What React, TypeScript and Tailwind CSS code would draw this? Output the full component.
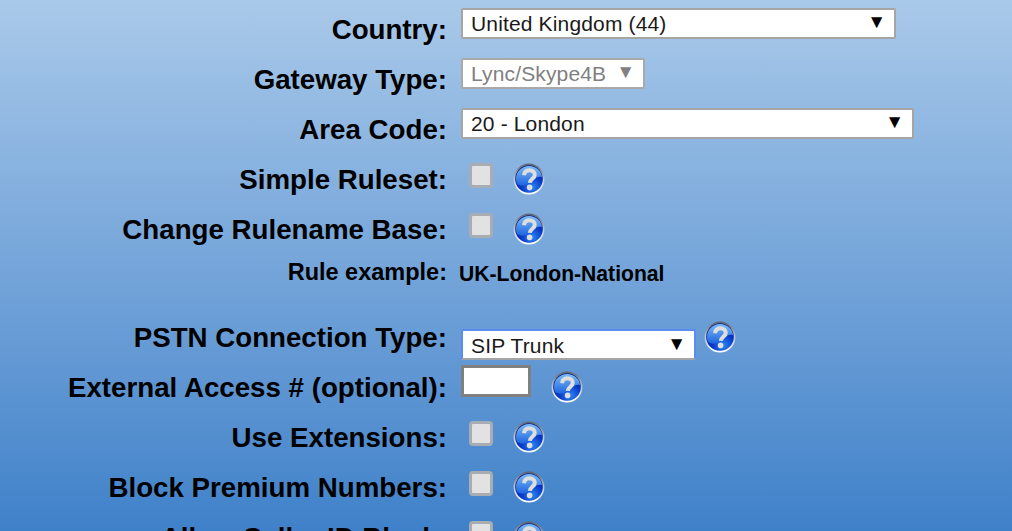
import { useId } from "react";

function HelpIcon({ className = "" }: { className?: string }) {
  const id = useId();
  return (
    <svg width="32" height="32" viewBox="0 0 32 32" className={`shrink-0 ${className}`}>
      <defs>
        <linearGradient id={`${id}ring`} x1="0" y1="0" x2="0" y2="1">
          <stop offset="0" stopColor="#5f646a" />
          <stop offset="0.45" stopColor="#b9bec4" />
          <stop offset="1" stopColor="#ffffff" />
        </linearGradient>
        <radialGradient id={`${id}ball`} cx="0.62" cy="0.8" r="0.8">
          <stop offset="0" stopColor="#2a86f2" />
          <stop offset="0.5" stopColor="#0636c8" />
          <stop offset="1" stopColor="#031f96" />
        </radialGradient>
        <linearGradient id={`${id}shine`} x1="0" y1="0" x2="0" y2="1">
          <stop offset="0" stopColor="#7dbcf5" />
          <stop offset="1" stopColor="#1c63e0" />
        </linearGradient>
      </defs>
      <circle cx="16" cy="16" r="15.400" fill={`url(#${id}ring)`} />
      <circle cx="16" cy="16" r="13.800" fill={`url(#${id}ball)`} />
      <path d="M3 16C3 8.500 9 3 16 3S29 8.500 29 14C22 12.500 19 19 13 22 9 23.500 5.500 22.500 3.800 20.500 3.300 19 3 17.500 3 16Z" fill={`url(#${id}shine)`} />
      <path d="M11 12.200C11.400 8.800 13.600 7.200 16.400 7.200 19.600 7.200 21.800 9 21.800 11.800 21.800 15.600 17 15.800 16.800 19.800" fill="none" stroke="#dedede" strokeWidth="4" />
      <circle cx="16.600" cy="24.400" r="2.800" fill="#dedede" />
    </svg>
  );
}

function Select({ value, width, disabled = false, focused = false, arrowRight = 18 }: { value: string; width: string; disabled?: boolean; focused?: boolean; arrowRight?: number }) {
  return (
    <div className={`relative ${width}`}>
      <select
        disabled={disabled}
        defaultValue={value}
        className={`block h-full w-full appearance-none rounded-[2px] bg-white pb-0 pl-[8px] text-[21px] leading-[25px] tracking-[0.15px] outline-none ${
          disabled
            ? "border-2 border-[#a9a9a9] pt-0 text-[#808080]"
            : focused
              ? "border-2 border-[#5b8df0] border-b-[#a5a5a5] pt-[2px] text-[#1a1a1a]"
              : "border-2 border-[#a5a5a5] pt-0 text-[#1a1a1a]"
        }`}
      >
        <option>{value}</option>
      </select>
      <span
        className={`pointer-events-none absolute text-[19px] leading-[26px] ${focused ? "top-[2px]" : "top-[1px]"} ${disabled ? "text-[#808080]" : "text-black"}`}
        style={{ right: arrowRight }}
      >
        ▼
      </span>
    </div>
  );
}

function Check() {
  return (
    <input
      type="checkbox"
      className="block h-[25px] w-[24px] appearance-none rounded-[4px] border-[3px] border-[#a8adb3] bg-[#e2e2e2]"
    />
  );
}

function Row({ label, children, small = false, className = "h-[50px]" }: { label: string; children: React.ReactNode; small?: boolean; className?: string }) {
  return (
    <div className={`flex ${className}`}>
      <div className={`w-[447px] shrink-0 text-right font-bold text-black ${small ? "pt-[3px] text-[23.500px] leading-[30px]" : "pt-[10px] text-[27.700px] leading-[32px]"}`}>
        {label}
      </div>
      <div className="relative flex min-w-0 flex-1 pl-[14px]">{children}</div>
    </div>
  );
}

function CheckHelp() {
  return (
    <div className="flex items-start pl-[8px]">
      <div className="pt-[9px]">
        <Check />
      </div>
      <HelpIcon className="mt-[9px] ml-[20px]" />
    </div>
  );
}

export default function App() {
  return (
    <div
      className="h-[531px] w-full overflow-hidden bg-gradient-to-b from-[#a9c9e9] to-[#3f81c9] pt-[4px]"
      style={{ fontFamily: '"Liberation Sans", Arial, sans-serif' }}
    >
      <Row label="Country:">
        <div className="pt-[4px]">
          <Select value="United Kingdom (44)" width="h-[31px] w-[435px]" arrowRight={10} />
        </div>
      </Row>
      <Row label="Gateway Type:">
        <div className="pt-[4px]">
          <Select value="Lync/Skype4B" width="h-[31px] w-[184px]" disabled arrowRight={10} />
        </div>
      </Row>
      <Row label="Area Code:">
        <div className="pt-[4px]">
          <Select value="20 - London" width="h-[31px] w-[453px]" arrowRight={10} />
        </div>
      </Row>
      <Row label="Simple Ruleset:">
        <CheckHelp />
      </Row>
      <Row label="Change Rulename Base:">
        <CheckHelp />
      </Row>
      <Row label="Rule example:" small className="h-[58px]">
        <div className="-ml-[2px] pt-[5px] text-[21.150px] leading-[30px] font-bold text-black">UK-London-National</div>
      </Row>
      <Row label="PSTN Connection Type:">
        <div className="flex items-start">
          <div className="pt-[17px]">
            <Select value="SIP Trunk" width="h-[31px] w-[235px]" focused arrowRight={10} />
          </div>
          <HelpIcon className="mt-[9px] ml-[8px]" />
        </div>
      </Row>
      <Row label="External Access # (optional):">
        <div className="flex items-start">
          <input className="mt-[3px] h-[32px] w-[70px] border-[3px] border-[#808080] bg-white outline-none" />
          <HelpIcon className="mt-[9px] ml-[20px]" />
        </div>
      </Row>
      <Row label="Use Extensions:">
        <CheckHelp />
      </Row>
      <Row label="Block Premium Numbers:">
        <CheckHelp />
      </Row>
      <Row label="Allow Caller ID Block:">
        <CheckHelp />
      </Row>
    </div>
  );
}
